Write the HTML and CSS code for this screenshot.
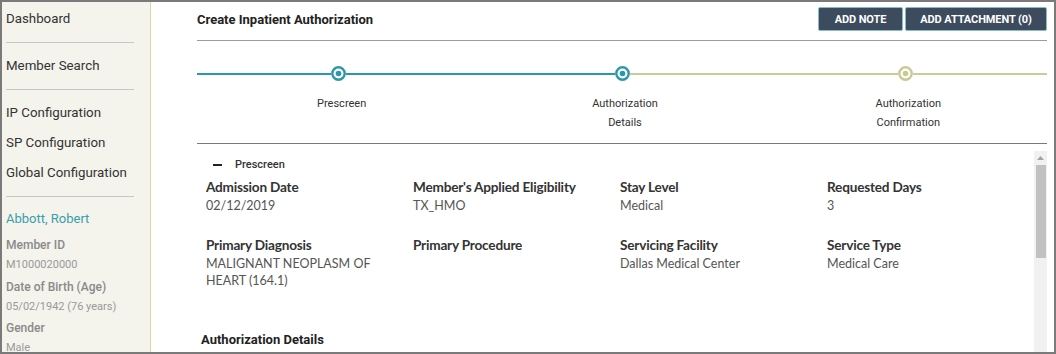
FILE: index.html
```html
<!DOCTYPE html>
<html>
<head>
<meta charset="utf-8">
<link rel="stylesheet" href="styles.css">
</head>
<body>
<div class="frame">
  <aside class="sidebar">
    <div class="nav-item">Dashboard</div>
    <div class="sep"></div>
    <div class="nav-item">Member Search</div>
    <div class="sep"></div>
    <div class="nav-item">IP Configuration</div>
    <div class="nav-item">SP Configuration</div>
    <div class="nav-item">Global Configuration</div>
    <div class="sep"></div>
    <div class="member-name">Abbott, Robert</div>
    <div class="info">
      <div class="info-label">Member ID</div>
      <div class="info-value">M1000020000</div>
    </div>
    <div class="info">
      <div class="info-label">Date of Birth (Age)</div>
      <div class="info-value">05/02/1942 (76 years)</div>
    </div>
    <div class="info">
      <div class="info-label">Gender</div>
      <div class="info-value">Male</div>
    </div>
  </aside>
  <main class="main">
    <header class="header">
      <h1 class="title">Create Inpatient Authorization</h1>
      <div class="actions">
        <button class="btn btn-note">ADD NOTE</button>
        <button class="btn btn-attach">ADD ATTACHMENT (0)</button>
      </div>
    </header>
    <section class="stepper">
      <div class="step">
        <div class="track">
          <span class="line done"></span>
          <svg class="dot" width="15" height="15" viewBox="0 0 15 15"><circle cx="7.5" cy="7.5" r="6.2" fill="#fff" stroke="#2a97aa" stroke-width="2.4"/><circle cx="7.5" cy="7.5" r="2.8" fill="#2a97aa"/></svg>
          <span class="line done"></span>
        </div>
        <div class="step-label">Prescreen</div>
      </div>
      <div class="step">
        <div class="track">
          <span class="line done"></span>
          <svg class="dot" width="15" height="15" viewBox="0 0 15 15"><circle cx="7.5" cy="7.5" r="6.2" fill="#fff" stroke="#2a97aa" stroke-width="2.4"/><circle cx="7.5" cy="7.5" r="2.8" fill="#2a97aa"/></svg>
          <span class="line todo"></span>
        </div>
        <div class="step-label">Authorization Details</div>
      </div>
      <div class="step">
        <div class="track">
          <span class="line todo"></span>
          <svg class="dot" width="15" height="15" viewBox="0 0 15 15"><circle cx="7.5" cy="7.5" r="6.2" fill="#fff" stroke="#c9ca93" stroke-width="2.4"/><circle cx="7.5" cy="7.5" r="2.8" fill="#c9ca93"/></svg>
          <span class="line todo"></span>
        </div>
        <div class="step-label">Authorization Confirmation</div>
      </div>
    </section>
    <section class="panel">
      <div class="panel-body">
        <div class="section-head"><span class="collapse"></span>Prescreen</div>
        <div class="grid">
          <div class="field">
            <div class="f-label">Admission Date</div>
            <div class="f-value">02/12/2019</div>
          </div>
          <div class="field">
            <div class="f-label">Member's Applied Eligibility</div>
            <div class="f-value">TX_HMO</div>
          </div>
          <div class="field">
            <div class="f-label">Stay Level</div>
            <div class="f-value">Medical</div>
          </div>
          <div class="field">
            <div class="f-label">Requested Days</div>
            <div class="f-value">3</div>
          </div>
          <div class="field">
            <div class="f-label">Primary Diagnosis</div>
            <div class="f-value">MALIGNANT NEOPLASM OF HEART (164.1)</div>
          </div>
          <div class="field">
            <div class="f-label">Primary Procedure</div>
            <div class="f-value"></div>
          </div>
          <div class="field">
            <div class="f-label">Servicing Facility</div>
            <div class="f-value">Dallas Medical Center</div>
          </div>
          <div class="field">
            <div class="f-label">Service Type</div>
            <div class="f-value">Medical Care</div>
          </div>
        </div>
        <h2 class="sub-title">Authorization Details</h2>
      </div>
      <div class="scrollbar">
        <div class="sb-arrow"><svg width="7" height="4" viewBox="0 0 7 4"><path d="M0 4 L3.5 0 L7 4 Z" fill="#a3a3a3"/></svg></div>
        <div class="sb-thumb"></div>
      </div>
    </section>
  </main>
</div>
</body>
</html>
```

FILE: styles.css
```css
* { box-sizing: border-box; }
html, body { margin: 0; padding: 0; }
body {
  font-family: Roboto, "Liberation Sans", sans-serif;
  color: #333;
  background: #fff;
}
.frame {
  width: 1056px;
  height: 354px;
  border: 2px solid #7a7a7a;
  display: flex;
  overflow: hidden;
}
.sidebar {
  width: 149px;
  flex: none;
  background: #f4f3ec;
  border-right: 1px solid #d9d9a6;
  padding: 2px 0 0 4px;
  overflow: hidden;
}
.nav-item {
  font-size: 13.3px;
  line-height: 30px;
  color: #333;
}
.sep {
  width: 128px;
  height: 1px;
  background: #c6c6c2;
  margin: 8px 0;
}
.member-name {
  font-size: 13px;
  line-height: 28px;
  margin-bottom: 3px;
  color: #3a9eae;
}
.info { margin-bottom: 3.5px; }
.info-label {
  font-size: 12px;
  line-height: 19px;
  font-weight: 500;
  color: #8a8a8a;
}
.info-value {
  font-size: 11px;
  line-height: 19px;
  color: #9a9a9a;
}
.main {
  flex: 1;
  min-width: 0;
  padding: 0 7px 0 46px;
  display: flex;
  flex-direction: column;
}
.header {
  display: flex;
  align-items: center;
  justify-content: space-between;
  padding: 5px 0 9px 0;
  border-bottom: 1px solid #9c9c9c;
}
.title {
  margin: 0;
  font-size: 13px;
  font-weight: 700;
  color: #222;
}
.actions { display: flex; gap: 2px; }
.btn {
  height: 24px;
  border: 1px solid #86bcc4;
  border-radius: 2px;
  background: #3d4b5e;
  color: #fff;
  font-family: Roboto, "Liberation Sans", sans-serif;
  font-size: 11px;
  font-weight: 700;
  letter-spacing: -0.1px;
  padding: 0;
}
.btn-note { width: 85px; }
.btn-attach { width: 142px; }
.stepper {
  display: flex;
  padding: 25px 0 11px;
  border-bottom: 1px solid #7a7a7a;
}
.step { flex: 1; }
.track {
  display: flex;
  align-items: center;
  height: 15px;
}
.line { flex: 1; height: 2px; }
.line.done { background: #2a97aa; }
.line.todo { background: #cbcc98; }
.dot { display: block; flex: none; }
.step-label {
  margin: 13px auto 0;
  width: 90px;
  padding-left: 6px;
  text-align: center;
  font-size: 11px;
  line-height: 19px;
  color: #333;
  height: 38px;
}
.panel {
  flex: 1;
  min-height: 0;
  margin-top: 7px;
  display: flex;
  overflow: hidden;
}
.panel-body { flex: 1; min-width: 0; }
.section-head {
  display: flex;
  align-items: center;
  padding: 6px 0 0 16px;
  font-size: 11px;
  line-height: 16px;
  font-weight: 500;
  color: #333;
}
.collapse {
  width: 9px;
  height: 2px;
  background: #222;
  margin-right: 13px;
}
.grid {
  margin-top: 5px;
  padding-left: 9px;
  display: grid;
  grid-template-columns: repeat(4, 1fr);
  row-gap: 22px;
}
.field { padding-right: 8px; }
.f-label {
  font-family: Lato, "Liberation Sans", sans-serif;
  font-weight: 700;
  font-size: 13.6px;
  line-height: 19px;
  color: #333;
  letter-spacing: -0.2px;
}
.f-value {
  font-family: Lato, "Liberation Sans", sans-serif;
  font-size: 12.5px;
  line-height: 17px;
  color: #555;
}
.sub-title {
  margin: 42px 0 0 4px;
  font-size: 13px;
  line-height: 18px;
  font-weight: 700;
  color: #222;
}
.scrollbar {
  width: 13px;
  flex: none;
  background: #f1f1f1;
  display: flex;
  flex-direction: column;
  align-items: center;
}
.sb-arrow {
  height: 14px;
  display: flex;
  align-items: center;
  justify-content: center;
}
.sb-thumb {
  width: 10px;
  height: 93px;
  background: #c1c1c1;
}
```
